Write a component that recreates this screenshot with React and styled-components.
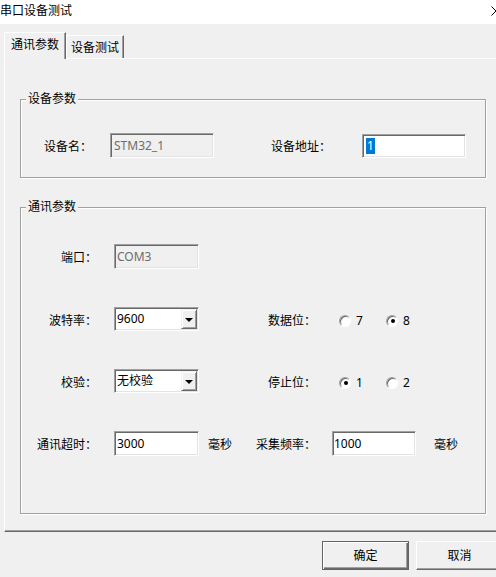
import styled, { createGlobalStyle } from "styled-components";

const GlobalStyle = createGlobalStyle`
  html, body {
    margin: 0;
    padding: 0;
    background: #f0f0f0;
  }
  body {
    font-family: "Noto Sans", "Noto Sans CJK SC", sans-serif;
    font-size: 12px;
    line-height: 16px;
    color: #000;
  }
`;

const Window = styled.div`
  width: 496px;
  height: 577px;
  overflow: hidden;
  display: flex;
  flex-direction: column;
  background: #f0f0f0;
`;

const TitleBar = styled.div`
  height: 24px;
  flex-shrink: 0;
  background: #fff;
  display: flex;
  align-items: center;
  justify-content: space-between;
`;

const Title = styled.span`
  margin-left: 0;
  margin-top: -3px;
`;

const CloseIcon = styled.svg`
  width: 10px;
  height: 10px;
  margin-right: -5px;
  margin-top: -3px;
`;

const Body = styled.div`
  padding: 8px 0 0 4px;
`;

const TabStrip = styled.div`
  position: relative;
  z-index: 1;
  height: 26px;
  display: flex;
  align-items: flex-end;
`;

const Tab = styled.div`
  box-sizing: border-box;
  width: ${(p) => (p.$active ? "62px" : "58px")};
  height: ${(p) => (p.$active ? "27px" : "23px")};
  margin-bottom: ${(p) => (p.$active ? "-1px" : "0")};
  padding-top: 4px;
  text-align: center;
  background: #f0f0f0;
  border-top: 1px solid #fff;
  border-left: 1px solid #fff;
  border-right: 1px solid #696969;
  box-shadow: inset -1px 0 #a0a0a0;
`;

const Panel = styled.div`
  box-sizing: border-box;
  width: 500px;
  height: 474px;
  padding: 40px 0 0 15px;
  border-top: 1px solid #fff;
  border-left: 1px solid #fff;
  border-bottom: 1px solid #696969;
  box-shadow: inset 0 -1px #a0a0a0;
`;

const GroupBox = styled.div`
  position: relative;
  box-sizing: border-box;
  width: 466px;
  height: ${(p) => p.$h}px;
  margin-top: ${(p) => p.$mt || 0}px;
  padding-top: ${(p) => p.$pt}px;
  border: 1px solid #a0a0a0;
  box-shadow: 1px 1px 0 #fff, inset 1px 1px 0 #fff;
`;

const Legend = styled.span`
  position: absolute;
  top: -9px;
  left: 5px;
  padding: 0 2px;
  background: #f0f0f0;
`;

const Rows = styled.div`
  display: flex;
  flex-direction: column;
  gap: 38px;
`;

const Row = styled.div`
  display: flex;
  align-items: center;
  height: ${(p) => p.$h}px;
`;

const Label = styled.div`
  flex-shrink: 0;
  width: ${(p) => p.$w}px;
  text-align: right;
  padding-top: 3px;
  white-space: nowrap;
`;

const Unit = styled.div`
  flex-shrink: 0;
  width: ${(p) => p.$w || 0}px;
  margin-left: ${(p) => p.$ml || 0}px;
  padding-top: 2px;
  white-space: nowrap;
`;

const Field = styled.div`
  box-sizing: border-box;
  flex-shrink: 0;
  width: ${(p) => p.$w}px;
  height: ${(p) => p.$h}px;
  margin-left: ${(p) => p.$ml}px;
  padding: 0 0 0 ${(p) => p.$pl ?? 2}px;
  display: flex;
  align-items: center;
  background: ${(p) => (p.$disabled ? "#f0f0f0" : "#fff")};
  color: ${(p) => (p.$disabled ? "#6d6d6d" : "#000")};
  border: 1px solid;
  border-color: #a0a0a0 #fff #fff #a0a0a0;
  box-shadow: inset 1px 1px #696969, inset -1px -1px #e3e3e3;
  white-space: nowrap;
`;

const Selected = styled.span`
  background: #0078d7;
  color: #fff;
  padding: 0 1px;
  margin-left: 1px;
`;

const Combo = styled(Field)`
  justify-content: space-between;
  padding-right: 1px;
`;

const DropButton = styled.div`
  box-sizing: border-box;
  width: 16px;
  height: 20px;
  display: flex;
  align-items: center;
  justify-content: center;
  background: #f0f0f0;
  border: 1px solid;
  border-color: #f0f0f0 #696969 #696969 #f0f0f0;
  box-shadow: inset 1px 1px #fff, inset -1px -1px #a0a0a0;

  &::after {
    content: "";
    border-left: 4px solid transparent;
    border-right: 4px solid transparent;
    border-top: 4px solid #000;
    margin-top: 1px;
  }
`;

const RadioGroup = styled.div`
  display: flex;
  margin-left: 23px;
  padding-top: 3px;
`;

const RadioItem = styled.label`
  width: 47px;
  display: flex;
  align-items: center;
  gap: 5px;
`;

const RadioCircle = styled.span`
  box-sizing: border-box;
  width: 12px;
  height: 12px;
  border-radius: 50%;
  border: 1px solid;
  border-color: #a0a0a0 #fff #fff #a0a0a0;
  background: #fff;
  box-shadow: inset 1px 1px #696969;
  display: flex;
  align-items: center;
  justify-content: center;

  &::after {
    content: "";
    display: ${(p) => (p.$checked ? "block" : "none")};
    width: 4px;
    height: 4px;
    border-radius: 50%;
    background: #000;
    margin: 1px 0 0 1px;
  }
`;

const ButtonRow = styled.div`
  display: flex;
  justify-content: flex-end;
  gap: 7px;
  margin: 9px -7px 0 0;
`;

const Button = styled.button`
  box-sizing: border-box;
  width: 87px;
  height: 29px;
  padding: 0;
  font: inherit;
  color: #000;
  background: #f0f0f0;
  border: 1px solid;
  border-color: ${(p) =>
    p.$default ? "#646464" : "#fff #696969 #696969 #fff"};
  box-shadow: ${(p) =>
    p.$default
      ? "inset 1px 1px #fff, inset -1px -1px #696969, inset -2px -2px #a0a0a0"
      : "inset -1px -1px #a0a0a0"};
`;

function Radio({ label, checked }) {
  return (
    <RadioItem>
      <RadioCircle $checked={checked} />
      <span>{label}</span>
    </RadioItem>
  );
}

export default function App() {
  return (
    <>
      <GlobalStyle />
      <Window>
        <TitleBar>
          <Title>串口设备测试</Title>
          <CloseIcon viewBox="0 0 10 10">
            <path d="M0.5 0.5 L9.5 9.5 M9.5 0.5 L0.5 9.5" stroke="#000" strokeWidth="1" />
          </CloseIcon>
        </TitleBar>
        <Body>
          <TabStrip>
            <Tab $active>通讯参数</Tab>
            <Tab>设备测试</Tab>
          </TabStrip>
          <Panel>
            <GroupBox $h={79} $pt={33}>
              <Legend>设备参数</Legend>
              <Row $h={25}>
                <Label $w={71}>设备名：</Label>
                <Field $w={104} $h={25} $ml={18} $pl={3} $disabled>
                  STM32_1
                </Field>
                <Label $w={117}>设备地址：</Label>
                <Field $w={104} $h={24} $ml={31}>
                  <Selected>1</Selected>
                </Field>
              </Row>
            </GroupBox>

            <GroupBox $h={307} $pt={36} $mt={29}>
              <Legend>通讯参数</Legend>
              <Rows>
                <Row $h={25}>
                  <Label $w={76}>端口：</Label>
                  <Field $w={85} $h={25} $ml={17} $disabled>
                    COM3
                  </Field>
                </Row>
                <Row $h={24}>
                  <Label $w={76}>波特率：</Label>
                  <Combo $w={85} $h={24} $ml={17}>
                    9600
                    <DropButton />
                  </Combo>
                  <Unit $w={55} />
                  <Label $w={62}>数据位：</Label>
                  <RadioGroup>
                    <Radio label="7" />
                    <Radio label="8" checked />
                  </RadioGroup>
                </Row>
                <Row $h={24}>
                  <Label $w={76}>校验：</Label>
                  <Combo $w={85} $h={24} $ml={17}>
                    无校验
                    <DropButton />
                  </Combo>
                  <Unit $w={55} />
                  <Label $w={62}>停止位：</Label>
                  <RadioGroup>
                    <Radio label="1" checked />
                    <Radio label="2" />
                  </RadioGroup>
                </Row>
                <Row $h={25}>
                  <Label $w={76}>通讯超时：</Label>
                  <Field $w={85} $h={25} $ml={17}>
                    3000
                  </Field>
                  <Unit $w={46} $ml={9}>
                    毫秒
                  </Unit>
                  <Label $w={62}>采集频率：</Label>
                  <Field $w={84} $h={25} $ml={16} $pl={1}>
                    1000
                  </Field>
                  <Unit $ml={18}>毫秒</Unit>
                </Row>
              </Rows>
            </GroupBox>
          </Panel>
          <ButtonRow>
            <Button $default>确定</Button>
            <Button>取消</Button>
          </ButtonRow>
        </Body>
      </Window>
    </>
  );
}
